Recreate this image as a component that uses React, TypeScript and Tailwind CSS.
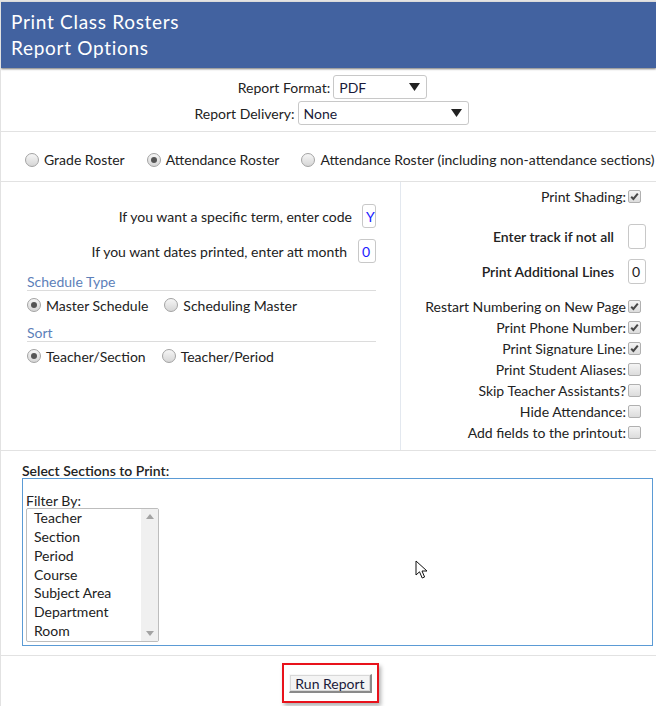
import React from "react";

const font = { fontFamily: "Lato, 'Noto Sans', sans-serif" };

function Radio({ checked }: { checked?: boolean }) {
  return (
    <span className="w-[14px] h-[14px] shrink-0 rounded-full border border-[#a3a3a3] bg-linear-to-b from-[#f6f6f6] to-[#d6d6d6] flex items-center justify-center">
      {checked && <span className="w-[6px] h-[6px] rounded-full bg-[#555]" />}
    </span>
  );
}

function Check({ checked }: { checked?: boolean }) {
  return (
    <span className="w-[13px] h-[13px] shrink-0 rounded-[2px] border border-[#b0b0b0] bg-linear-to-b from-[#f4f4f4] to-[#dcdcdc] flex items-center justify-center">
      {checked && (
        <svg width="11" height="11" viewBox="0 0 11 11">
          <path d="M2.2 5.8 L4.4 8 L8.8 2.6" fill="none" stroke="#474747" strokeWidth="2" />
        </svg>
      )}
    </span>
  );
}

function Select({ value, width }: { value: string; width: string }) {
  return (
    <div className={`${width} h-[24px] border border-[#c8c8c8] rounded-[3px] bg-white flex items-center justify-between pl-[5px] pr-[6px] text-[#1a1a3a]`}>
      <span>{value}</span>
      <svg width="11" height="8" viewBox="0 0 11 8">
        <polygon points="0,0 11,0 5.5,8" fill="#222" />
      </svg>
    </div>
  );
}

function Input({ value, w, blue, h = "h-[24px]" }: { value: string; w: string; blue?: boolean; h?: string }) {
  return (
    <div className={`${w} ${h} border border-[#c8c8c8] rounded-[3px] bg-white flex items-center pl-[3px] ${blue ? "text-[#1a1aff]" : "text-[#222]"}`}>
      {value}
    </div>
  );
}

function RadioItem({ label, checked }: { label: string; checked?: boolean }) {
  return (
    <div className="flex items-center gap-[5px]">
      <Radio checked={checked} />
      <span>{label}</span>
    </div>
  );
}

function CheckRow({ label, checked }: { label: string; checked?: boolean }) {
  return (
    <>
      <div className="h-[21px] flex items-center justify-end pr-[2px]">{label}</div>
      <div className="h-[21px] flex items-center">
        <Check checked={checked} />
      </div>
    </>
  );
}

export default function App() {
  const items = ["Teacher", "Section", "Period", "Course", "Subject Area", "Department", "Room"];
  return (
    <div style={font} className="w-[656px] h-[706px] overflow-hidden bg-white text-[14px] text-[#222] border-l border-[#e2e2e2] relative">
      <div className="h-[2px] bg-[#e4e4e4]" />
      <div className="h-[66px] bg-[#4262a0] text-white text-[19px] leading-[26px] tracking-[0.7px] pl-[10px] pt-[7px] shadow-[0_1px_2px_rgba(0,0,0,0.55)] relative z-10">
        <div>Print Class Rosters</div>
        <div>Report Options</div>
      </div>

      <div className="pt-[7px] pb-[6px] flex flex-col gap-[2px] border-b border-[#e2e2e2]">
        <div className="flex justify-center items-center gap-[3px] pl-[8px]">
          <span>Report Format:</span>
          <Select value="PDF" width="w-[94px]" />
        </div>
        <div className="flex justify-center items-center gap-[3px] pl-[6px]">
          <span>Report Delivery:</span>
          <Select value="None" width="w-[171px]" />
        </div>
      </div>

      <div className="h-[50px] flex items-center pt-[6px] pl-[24px] gap-[22px] border-b border-[#e2e2e2] whitespace-nowrap">
        <RadioItem label="Grade Roster" />
        <RadioItem label="Attendance Roster" checked />
        <RadioItem label="Attendance Roster (including non-attendance sections)" />
      </div>

      <div className="flex h-[269px] border-b border-[#e2e2e2]">
        <div className="w-[400px] border-r border-[#e3e8ef] pt-[22px] pl-[26px] pr-[24px]">
          <div className="flex justify-end items-center gap-[10px]">
            <span>If you want a specific term, enter code</span>
            <Input value="Y" w="w-[14px]" blue />
          </div>
          <div className="flex justify-end items-center gap-[11px] mt-[11px]">
            <span>If you want dates printed, enter att month</span>
            <Input value="0" w="w-[18px]" blue />
          </div>
          <div className="mt-[10px] text-[#5d7fb9] leading-[17px] border-b border-[#dcdcdc]">Schedule Type</div>
          <div className="flex items-center gap-[16px] h-[24px] mt-[2px]">
            <RadioItem label="Master Schedule" checked />
            <RadioItem label="Scheduling Master" />
          </div>
          <div className="mt-[7px] text-[#5d7fb9] leading-[17px] border-b border-[#dcdcdc]">Sort</div>
          <div className="flex items-center gap-[16px] h-[24px] mt-[2px]">
            <RadioItem label="Teacher/Section" checked />
            <RadioItem label="Teacher/Period" />
          </div>
        </div>
        <div className="flex-1 pr-[10px]">
          <div className="grid grid-cols-[1fr_18px] items-center">
            <div className="mt-[4px] h-[21px] flex items-center justify-end pr-[2px]">Print Shading:</div>
            <div className="mt-[4px] h-[21px] flex items-center"><Check checked /></div>
            <div className="mt-[17px] h-[25px] flex items-center justify-end pr-[14px] font-semibold">Enter track if not all</div>
            <div className="mt-[17px]"><Input value="" w="w-[18px]" h="h-[25px]" /></div>
            <div className="mt-[10px] h-[25px] flex items-center justify-end pr-[14px] font-semibold">Print Additional Lines</div>
            <div className="mt-[10px]"><Input value="0" w="w-[18px]" h="h-[25px]" /></div>
            <div className="mt-[12px] h-[21px] flex items-center justify-end pr-[2px]">Restart Numbering on New Page</div>
            <div className="mt-[12px] h-[21px] flex items-center"><Check checked /></div>
            <CheckRow label="Print Phone Number:" checked />
            <CheckRow label="Print Signature Line:" checked />
            <CheckRow label="Print Student Aliases:" />
            <CheckRow label="Skip Teacher Assistants?" />
            <CheckRow label="Hide Attendance:" />
            <CheckRow label="Add fields to the printout:" />
          </div>
        </div>
      </div>

      <div className="pl-[21px] pr-[3px] pb-[9px] border-b border-[#e2e2e2]">
        <div className="mt-[13px] leading-[14px] font-semibold">Select Sections to Print:</div>
        <div className="h-[168px] border border-[#5b9bd5] pl-[3px] pt-[14px] relative">
          <div className="leading-[15px]">Filter By:</div>
          <div className="w-[133px] h-[134px] border border-[#bdbdbd] rounded-[2px] flex overflow-hidden">
            <div className="flex-1 pl-[7px]">
              {items.map((it) => (
                <div key={it} className="h-[18.85px] leading-[18.85px]">{it}</div>
              ))}
            </div>
            <div className="w-[17px] bg-[#f0f0f0] flex flex-col justify-between items-center py-[5px]">
              <svg width="8" height="5" viewBox="0 0 8 5"><polygon points="0,5 8,5 4,0" fill="#a3a3a3" /></svg>
              <svg width="8" height="5" viewBox="0 0 8 5"><polygon points="0,0 8,0 4,5" fill="#a3a3a3" /></svg>
            </div>
          </div>
          <svg className="absolute left-[392px] top-[81px]" width="14" height="20" viewBox="0 0 14 20">
            <path d="M1 1 L1 15 L4.5 11.8 L7.2 18 L9.6 17 L7 11 L12 11 Z" fill="#fff" stroke="#111" strokeWidth="1" strokeLinejoin="round" />
          </svg>
        </div>
      </div>

      <div className="flex justify-center pt-[7px] pl-[4px]">
        <div className="border-2 border-[#e8121b] px-[5px] pt-[9px] pb-[8px] shadow-[2px_3px_4px_rgba(0,0,0,0.3)]">
          <div className="h-[19px] px-[5px] flex items-center bg-[#f4f4f4] border-t border-l border-[#f8f8f8] border-b-2 border-r-2 border-b-[#8a8a8a] border-r-[#8a8a8a] shadow-[inset_0_0_0_1px_#d8d8d8] text-[#1a1a3a]">
            Run Report
          </div>
        </div>
      </div>
    </div>
  );
}
